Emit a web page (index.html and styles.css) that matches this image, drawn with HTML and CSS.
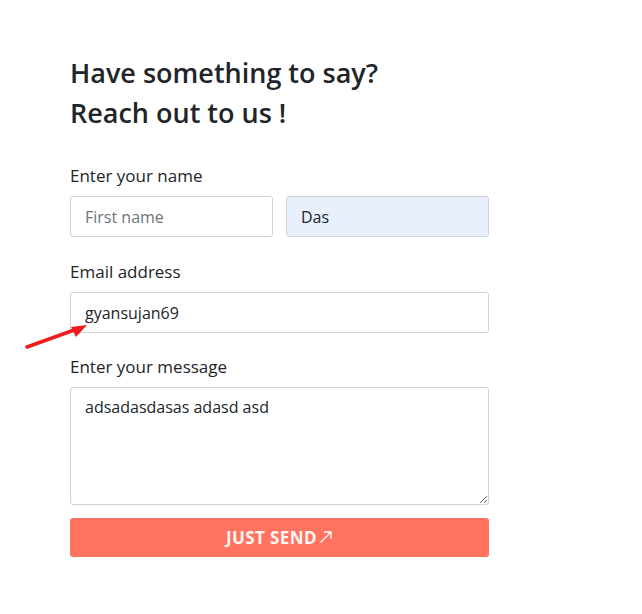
FILE: index.html
```html
<!DOCTYPE html>
<html lang="en">
<head>
<meta charset="utf-8">
<title>Contact</title>
<link rel="stylesheet" href="styles.css">
</head>
<body>
<div class="page">
  <form class="contact">
    <h1 class="title">Have something to say?<br>Reach out to us !</h1>
    <div class="group">
      <label class="label">Enter your name</label>
      <div class="row">
        <input class="field" type="text" placeholder="First name">
        <input class="field autofill" type="text" value="Das">
      </div>
    </div>
    <div class="group tight">
      <label class="label">Email address</label>
      <input class="field" type="text" value="gyansujan69">
    </div>
    <div class="group last">
      <label class="label">Enter your message</label>
      <textarea class="field area">adsadasdasas adasd asd</textarea>
    </div>
    <button class="send" type="button">JUST SEND<svg class="arr" width="14" height="14" viewBox="0 0 14 14"><path d="M1.5 12.5 L12 2 M5 2 H12 V9" fill="none" stroke="#ffffff" stroke-width="1.3"/></svg></button>
  </form>
  <svg class="pointer" width="100" height="40" viewBox="0 0 100 40">
    <line x1="12" y1="37" x2="62" y2="19" stroke="#ee1c1c" stroke-width="3.5" stroke-linecap="round"/>
    <polygon points="72,15 56,17 61,27" fill="#ee1c1c"/>
  </svg>
</div>
</body>
</html>
```
FILE: styles.css
```css
html, body {
  margin: 0;
  padding: 0;
  background: #ffffff;
}
body {
  font-family: "Open Sans", "Noto Sans", sans-serif;
  color: #212529;
}
.page {
  position: relative;
  padding: 53px 0 0 70px;
  width: 419px;
}
.contact {
  display: flex;
  flex-direction: column;
}
.title {
  margin: 0 0 31px 0;
  font-size: 27px;
  line-height: 40px;
  font-weight: 600;
  color: #212529;
}
.group {
  display: flex;
  flex-direction: column;
  margin-bottom: 23px;
}
.group.tight {
  margin-bottom: 22px;
}
.group.last {
  margin-bottom: 13px;
}
.label {
  font-size: 17px;
  line-height: 24px;
  margin-bottom: 8px;
}
.row {
  display: flex;
  gap: 13px;
}
.row .field {
  flex: 1;
  min-width: 0;
}
.field {
  box-sizing: border-box;
  height: 41px;
  border: 1px solid #ced4da;
  border-radius: 3px;
  padding: 0 14px;
  font-family: inherit;
  font-size: 16px;
  color: #212529;
  background: #ffffff;
  outline: none;
}
.field::placeholder {
  color: #6c757d;
}
.autofill {
  background: #e8f0fe;
}
.area {
  height: 118px;
  padding: 7px 14px;
  line-height: 24px;
  resize: vertical;
}
.send {
  box-sizing: border-box;
  height: 39px;
  border: none;
  border-radius: 3px;
  background: #ff7360;
  color: #fff6f4;
  font-family: inherit;
  font-size: 17px;
  font-weight: 700;
  letter-spacing: 0.4px;
  display: flex;
  align-items: center;
  justify-content: center;
}
.arr {
  margin-left: 2px;
  margin-top: -2px;
}
.pointer {
  position: absolute;
  left: 15px;
  top: 310px;
}
```
